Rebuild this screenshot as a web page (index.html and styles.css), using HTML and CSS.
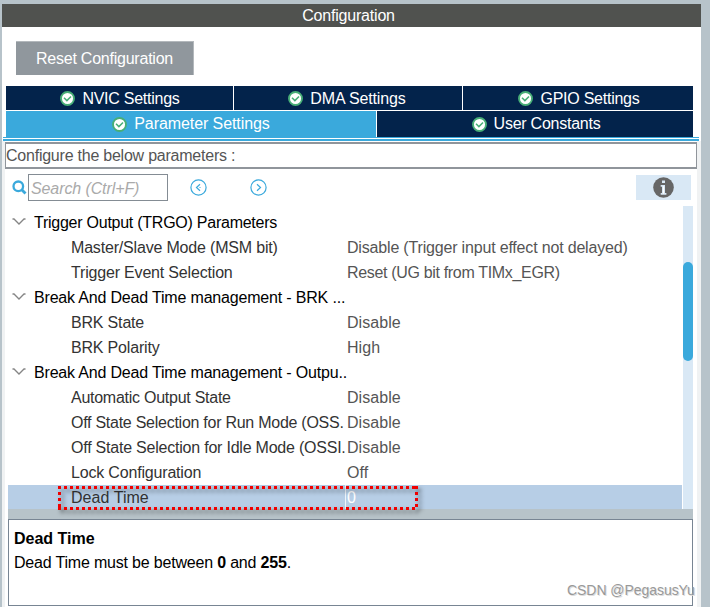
FILE: index.html
```html
<!DOCTYPE html>
<html lang="en">
<head>
<meta charset="utf-8">
<title>Configuration</title>
<link rel="stylesheet" href="styles.css">
</head>
<body>
<svg class="defs" aria-hidden="true">
  <symbol id="ok" viewBox="0 0 15 15"><circle cx="7.5" cy="7.5" r="6.5" fill="#fff" stroke="#48ae77" stroke-width="1.9"/><path d="M4 6.8 6.9 9.6 11 5.5" fill="none" stroke="#48ae77" stroke-width="1.5"/></symbol>
  <symbol id="chev" viewBox="0 0 14 8"><path d="M.5 1H2L7 6l5-5h1.5" fill="none" stroke="#858585" stroke-width="1.3"/></symbol>
</svg>
<main class="panel">
  <header class="title">Configuration</header>
  <div class="toolbar"><button class="reset">Reset Configuration</button></div>
  <nav class="tabs">
    <div class="tab-row top">
      <div class="tab"><svg><use href="#ok"/></svg><span>NVIC Settings</span></div>
      <div class="tab dma"><svg><use href="#ok"/></svg><span>DMA Settings</span></div>
      <div class="tab gpio"><svg><use href="#ok"/></svg><span>GPIO Settings</span></div>
    </div>
    <div class="tab-row bottom">
      <div class="tab active"><svg><use href="#ok"/></svg><span>Parameter Settings</span></div>
      <div class="tab"><svg><use href="#ok"/></svg><span>User Constants</span></div>
    </div>
  </nav>
  <div class="rule"></div>
  <section class="content">
    <div class="hint">Configure the below parameters :</div>
    <div class="search">
      <svg class="mag" viewBox="0 0 15 15"><circle cx="6.3" cy="6.3" r="4.8" fill="none" stroke="#3aa9dc" stroke-width="2.3"/><path d="m9.5 9.5 4 4" stroke="#3aa9dc" stroke-width="2.8"/></svg>
      <div class="field">Search (Ctrl+F)</div>
      <svg class="nav prev" viewBox="0 0 17 17"><circle cx="8.5" cy="8.5" r="7.6"/><path d="M10 5.3 6.5 8.5 10 11.7M9.5 8.5h1"/></svg>
      <svg class="nav next" viewBox="0 0 17 17"><circle cx="8.5" cy="8.5" r="7.6"/><path d="m7 5.3 3.5 3.2L7 11.7"/></svg>
      <div class="info"><svg viewBox="0 0 21 21"><circle cx="10.5" cy="10.5" r="10.3" fill="#666"/><path d="M9 3.5h3v2.6H9zM7.7 8H12v8h1.4v1.8H7.7V16H9V9.8H7.7z" fill="#d9e8f5"/><path d="M10 9.2h1v7.5h-1z" fill="#fff"/></svg></div>
    </div>
    <div class="list">
      <div class="rows">
        <div class="group tight"><svg><use href="#chev"/></svg><span>Trigger Output (TRGO) Parameters</span></div>
        <div class="row"><span class="name">Master/Slave Mode (MSM bit)</span><span class="value">Disable (Trigger input effect not delayed)</span></div>
        <div class="row"><span class="name">Trigger Event Selection</span><span class="value tight">Reset (UG bit from TIMx_EGR)</span></div>
        <div class="group"><svg><use href="#chev"/></svg><span>Break And Dead Time management - BRK ...</span></div>
        <div class="row"><span class="name">BRK State</span><span class="value short">Disable</span></div>
        <div class="row"><span class="name">BRK Polarity</span><span class="value short">High</span></div>
        <div class="group"><svg><use href="#chev"/></svg><span>Break And Dead Time management - Outpu..</span></div>
        <div class="row"><span class="name tight">Automatic Output State</span><span class="value short">Disable</span></div>
        <div class="row"><span class="name tight">Off State Selection for Run Mode (OSS.</span><span class="value short">Disable</span></div>
        <div class="row"><span class="name idle">Off State Selection for Idle Mode (OSSI.</span><span class="value short">Disable</span></div>
        <div class="row"><span class="name">Lock Configuration</span><span class="value short">Off</span></div>
        <div class="row selected"><span class="name short">Dead Time</span><span class="value short">0</span>
          <svg class="marker" viewBox="0 0 360 24"><path d="M0 1.5H360M0 22.5H360M1.5 0V24M358.5 0V24"/></svg>
        </div>
      </div>
      <div class="scroll"><div class="thumb"></div></div>
    </div>
    <div class="splitter"></div>
    <div class="details"><b>Dead Time</b><p>Dead Time must be between <b>0</b> and <b>255</b>.</p></div>
  </section>
</main>
<div class="watermark">CSDN @PegasusYu</div>
</body>
</html>
```
FILE: styles.css
```css
* { box-sizing: border-box; }
body {
  margin: 0;
  padding: 4px 9px 0 2px;
  height: 607px;
  overflow: hidden;
  background: #b7c3ca;
  font: 16px/25px "Liberation Sans", Arial, sans-serif;
  color: #333;
}
.defs { position: absolute; width: 0; height: 0; }
svg { display: block; flex: none; }
.panel { height: 603px; background: #fff; display: flex; flex-direction: column; }
.title {
  height: 23px;
  line-height: 23px;
  padding-right: 6px;
  background: #50524f;
  color: #fff;
  text-align: center;
  letter-spacing: -.2px;
}
.toolbar { height: 59px; padding: 14px 14px 0; }
.reset {
  display: block;
  width: 178px;
  height: 34px;
  padding: 0;
  border: 0 solid #b3b8bc;
  border-width: 1px 1px 0 0;
  background: #90979d;
  color: #fff;
  font: inherit;
  letter-spacing: -.23px;
}
.tabs { margin: 0 8px 0 4px; display: grid; row-gap: 1px; }
.tab-row { display: grid; column-gap: 1px; }
.tab-row.top { grid-template: 24px / 227px 228px 230px; }
.tab-row.bottom { grid-template: 26px / 370px 316px; }
.tab {
  display: flex;
  align-items: center;
  justify-content: center;
  gap: 7px;
  padding-left: 1px;
  background: #03234b;
  color: #fff;
  line-height: 24px;
  letter-spacing: -.25px;
}
.tab span { position: relative; top: 1px; }
.bottom .tab span { top: 0; }
.tab svg { width: 15px; height: 15px; }
.dma { padding: 0 2px 0 0; letter-spacing: -.12px; }
.gpio { padding-left: 2px; }
.active { background: #3aa9dc; padding-right: 1px; letter-spacing: -.08px; }
.bottom .tab + .tab { padding-left: 2px; }
.rule { height: 4px; margin: 0 2px 0 1px; border: solid #3aa9dc; border-width: 1px 0 2px; flex: none; }
.content {
  flex: 1;
  padding-top: 1px;
  border: solid #f0f2f3;
  border-width: 0 4px 0 3px;
}
.hint {
  height: 27px;
  padding-left: 0;
  border: solid #90959b;
  border-width: 2px 1px;
  line-height: 24px;
  color: #555;
  letter-spacing: -.23px;
}
.search { height: 37px; padding: 5px 6px 0; display: flex; }
.mag { width: 15px; height: 15px; margin: 6px 2px 0 1px; }
.field {
  width: 140px;
  height: 27px;
  margin-right: 22px;
  margin-left: -1px;
  padding-left: 2px;
  border: 1px solid #848c94;
  line-height: 27px;
  font-style: italic;
  color: #aaa;
  letter-spacing: -.1px;
}
.nav { width: 17px; height: 17px; margin-top: 5px; fill: none; stroke: #3aa9dc; stroke-width: 1.2; }
.next { margin-left: 43px; }
.info {
  width: 55px;
  height: 25px;
  margin: 1px 0 0 auto;
  display: grid;
  place-items: center;
  background: #d9e8f5;
}
.info svg { width: 21px; height: 21px; }
.list { height: 303px; margin: 0 4px 0 3px; display: flex; }
.rows { width: 674px; padding-top: 4px; }
.group, .row { height: 25px; display: flex; white-space: nowrap; letter-spacing: -.18px; }
.group { padding-left: 4px; color: #000; }
.group svg { width: 14px; height: 8px; margin: 8px 8px 0 0; }
.row { padding-left: 63px; }
.name { width: 274px; }
.value { padding-left: 2px; color: #555; }
.group.tight { letter-spacing: -.25px; }
.name.tight { letter-spacing: -.26px; }
.name.idle { letter-spacing: -.22px; }
.value.tight { letter-spacing: -.33px; }
.short { letter-spacing: .05px; }
.selected { position: relative; height: 24px; background: #b7cee6; }
.selected .value { border-left: 1px solid #eef4fa; padding-left: 1px; color: #fff; }
.marker {
  position: absolute;
  left: 50px;
  top: 1px;
  width: 360px;
  height: 24px;
  overflow: visible;
  fill: none;
  stroke: #f00000;
  stroke-width: 3;
  stroke-dasharray: 3 3;
  filter: drop-shadow(3px 3px 2px rgba(0, 0, 0, .5));
  z-index: 1;
}
.scroll { width: 10px; margin-left: 1px; padding-top: 56px; background: #d9e8f5; }
.thumb { height: 99px; border-radius: 5px; background: #3aa9dc; }
.splitter { height: 10px; margin: 0 4px 0 3px; background: #b7c3c9; }
.details {
  height: 87px;
  margin: 0 4px 0 3px;
  padding: 7px 5px;
  border: 1px solid #788593;
  color: #000;
  line-height: 24px;
}
.details p { margin: 0; letter-spacing: -.19px; }
.watermark {
  position: absolute;
  left: 567px;
  top: 578px;
  font: 14px/24px "Liberation Sans", Arial, sans-serif;
  letter-spacing: -.05px;
  color: #999;
  text-shadow: 1px 1px 0 #ddd;
}
```
